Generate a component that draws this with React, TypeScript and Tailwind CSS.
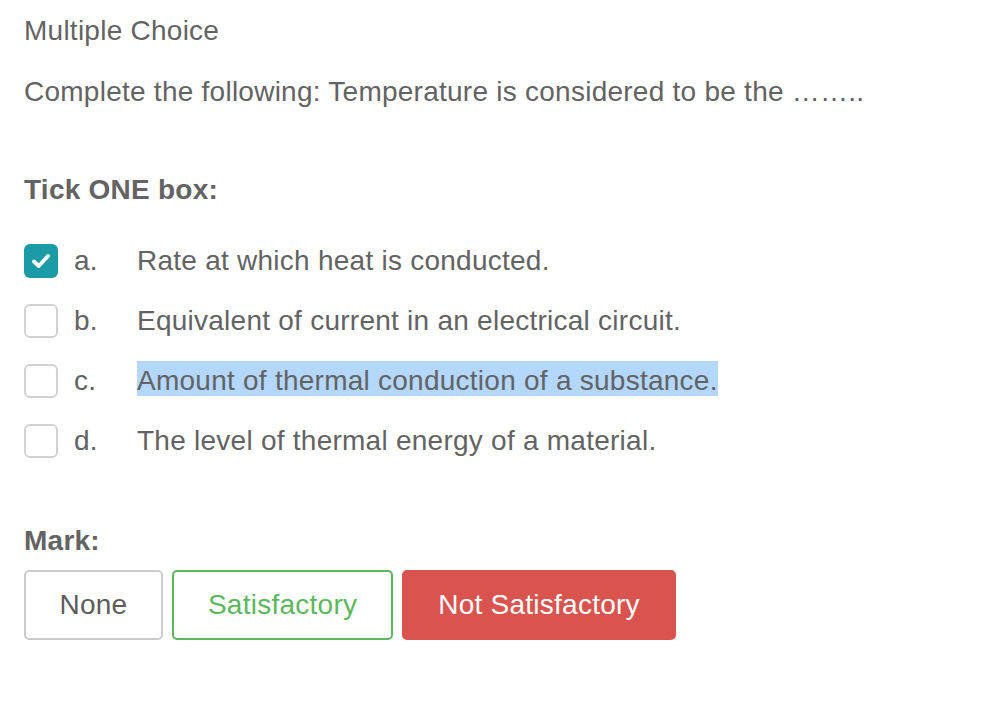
import React, { useState } from "react";

const options = [
  { key: "a", text: "Rate at which heat is conducted." },
  { key: "b", text: "Equivalent of current in an electrical circuit." },
  { key: "c", text: "Amount of thermal conduction of a substance.", highlighted: true },
  { key: "d", text: "The level of thermal energy of a material." },
];

function Checkbox({ checked }: { checked: boolean }) {
  return checked ? (
    <span className="w-[34px] h-[34px] rounded-[6px] bg-[#1a9ba6] flex items-center justify-center shrink-0">
      <svg width="20" height="16" viewBox="0 0 20 16" fill="none">
        <path d="M3 8.5 L7.8 13 L17 3" stroke="white" strokeWidth="3.8" strokeLinecap="round" strokeLinejoin="round" />
      </svg>
    </span>
  ) : (
    <span className="w-[34px] h-[34px] rounded-[6px] border-2 border-[#d2d2d2] bg-white shrink-0" />
  );
}

export default function App() {
  const [selected, setSelected] = useState("a");
  const [mark, setMark] = useState<string | null>(null);

  return (
    <div className="bg-white min-h-[712px] px-6 text-[28px] tracking-[0.25px] text-[#636363]" style={{ fontFamily: '"Liberation Sans", Arial, sans-serif' }}>
      <div className="h-[61px] leading-[61px]">Multiple Choice</div>
      <div className="h-[61px] leading-[61px]">Complete the following: Temperature is considered to be the ……..</div>

      <div className="mt-[48px] h-[40px] leading-[40px] font-bold">Tick ONE box:</div>

      <div className="mt-[21px]">
        {options.map(opt => (
          <div key={opt.key} className="h-[60px] flex items-center cursor-pointer" onClick={() => setSelected(opt.key)}>
            <Checkbox checked={selected === opt.key} />
            <span className="ml-[16px] w-[63px]">{opt.key}.</span>
            {opt.highlighted ? (
              <span className="self-start mt-[10px] bg-[#b3d7fd] pt-[4px] leading-[31px]">{opt.text}</span>
            ) : (
              <span>{opt.text}</span>
            )}
          </div>
        ))}
      </div>

      <div className="mt-[50px] h-[40px] leading-[40px] font-bold">Mark:</div>

      <div className="mt-[9px] flex gap-[9px]">
        <button
          onClick={() => setMark("none")}
          className="h-[70px] px-[33.5px] rounded-[5px] border-2 border-[#cccccc] bg-white text-[#5c5c5c]"
        >
          None
        </button>
        <button
          onClick={() => setMark("sat")}
          className="h-[70px] px-[34px] rounded-[5px] border-2 border-[#5cb85c] bg-white text-[#5cb85c]"
        >
          Satisfactory
        </button>
        <button
          onClick={() => setMark("not")}
          className="h-[70px] px-[34px] rounded-[5px] border-2 border-[#d9534f] bg-[#d9534f] text-white"
        >
          Not Satisfactory
        </button>
      </div>
      {mark && null}
    </div>
  );
}
